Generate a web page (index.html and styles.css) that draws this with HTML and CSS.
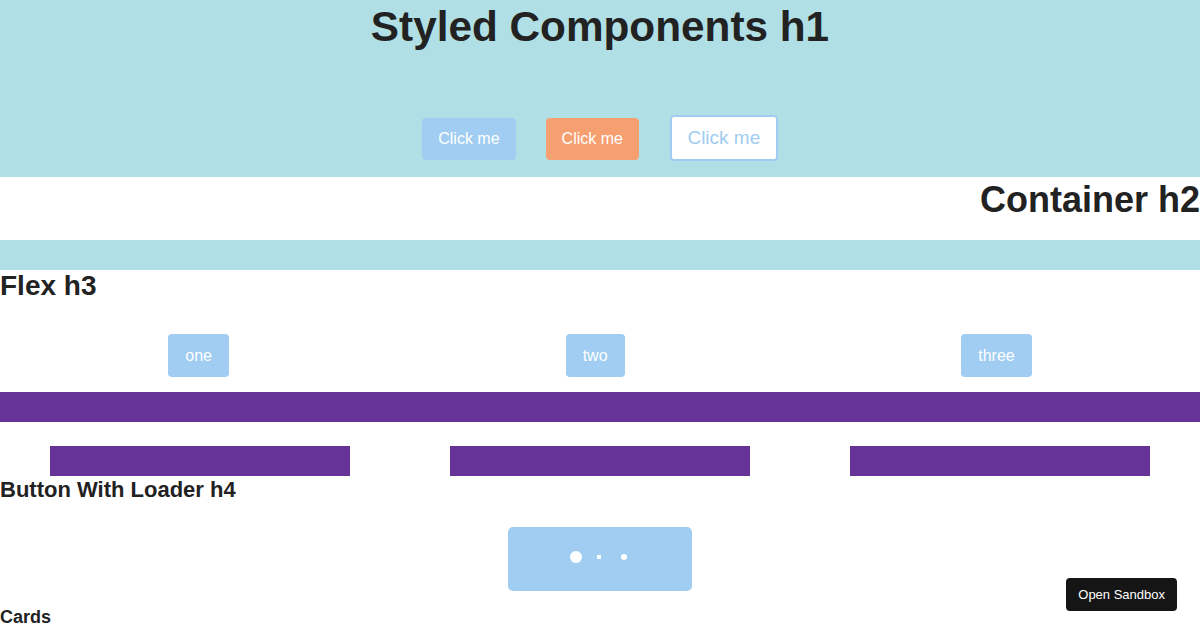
FILE: index.html
```html
<!DOCTYPE html>
<html>
<head>
<meta charset="utf-8">
<title>Styled Components</title>
<link rel="stylesheet" href="styles.css">
</head>
<body>
  <header class="hero">
    <h1 class="hero-title">Styled Components h1</h1>
    <div class="btn-row">
      <button class="btn btn-blue">Click me</button>
      <button class="btn btn-orange">Click me</button>
      <button class="btn btn-outline">Click me</button>
    </div>
  </header>
  <section class="container">
    <h2 class="container-title">Container h2</h2>
  </section>
  <div class="bar-blue"></div>
  <h3 class="flex-title">Flex h3</h3>
  <div class="flex-row">
    <span class="chip">one</span>
    <span class="chip">two</span>
    <span class="chip">three</span>
  </div>
  <div class="bar-purple"></div>
  <div class="box-row">
    <div class="box"></div>
    <div class="box"></div>
    <div class="box"></div>
  </div>
  <h4 class="loader-title">Button With Loader h4</h4>
  <div class="loader-row">
    <button class="loader-btn">
      <span class="dot dot-big"></span>
      <span class="dot dot-square"></span>
      <span class="dot dot-small"></span>
    </button>
  </div>
  <h5 class="cards-title">Cards</h5>
  <a class="sandbox-btn">Open Sandbox</a>
</body>
</html>
```
FILE: styles.css
```css
* { box-sizing: border-box; }
html, body { margin: 0; padding: 0; }
body {
  font-family: "Liberation Sans", Arial, sans-serif;
  color: #222;
  background: #fff;
  overflow: hidden;
  height: 630px;
}
.hero {
  background: #b0dfe5;
  height: 177px;
  padding-top: 0;
}
.hero-title {
  margin: 0;
  text-align: center;
  font-size: 42.3px;
  line-height: 52px;
  padding-top: 1px;
  font-weight: bold;
}
.btn-row {
  display: flex;
  justify-content: center;
  align-items: center;
  gap: 30px;
  margin-top: 62px;
  height: 46px;
}
.btn {
  font-family: "Liberation Sans", Arial, sans-serif;
  font-size: 16px;
  color: #fff;
  border: none;
  border-radius: 4px;
  height: 42px;
  padding: 0 16px;
  cursor: pointer;
  align-self: flex-end;
  margin-bottom: 1px;
}
.btn-blue { background: #a0cdf1; }
.btn-orange { background: #f6a072; }
.btn-outline {
  background: #fff;
  color: #a0cdf1;
  border: 2px solid #a0cdf1;
  font-size: 19px;
  height: 46px;
  padding: 0 15.5px;
  margin-left: 1px;
  margin-bottom: 0;
}
.container { height: 63px; padding-top: 2px; }
.container-title {
  margin: 0;
  text-align: right;
  font-size: 36px;
  line-height: 41px;
}
.bar-blue { height: 30px; background: #b0dfe5; }
.flex-title {
  margin: 0;
  font-size: 28px;
  line-height: 32px;
}
.flex-row {
  display: flex;
  justify-content: space-around;
  margin-top: 32px;
}
.chip {
  background: #a0cdf1;
  color: #fff;
  font-size: 16px;
  line-height: 43px;
  height: 43px;
  padding: 0 17px;
  border-radius: 4px;
}
.bar-purple {
  margin-top: 15px;
  height: 30px;
  background: #663399;
}
.box-row {
  display: flex;
  justify-content: space-around;
  margin-top: 24px;
}
.box { width: 300px; height: 30px; background: #663399; }
.loader-title {
  margin: 0;
  font-size: 22px;
  line-height: 27px;
}
.loader-row {
  display: flex;
  justify-content: center;
  margin-top: 24px;
}
.loader-btn {
  width: 184px;
  height: 64px;
  border: none;
  border-radius: 5px;
  background: #a0cdf1;
  display: flex;
  align-items: center;
  justify-content: center;
  padding: 0 3px 4px 0;
}
.dot { display: block; background: #fff; }
.dot-big { width: 12px; height: 12px; border-radius: 50%; margin-right: 15px; }
.dot-square { width: 4px; height: 4px; margin-right: 20px; }
.dot-small { width: 6px; height: 6px; border-radius: 50%; }
.cards-title {
  margin: 16px 0 0;
  font-size: 18px;
  line-height: 21px;
}
.sandbox-btn {
  position: fixed;
  right: 23px;
  bottom: 19px;
  height: 33px;
  padding: 0 12px;
  background: #151515;
  color: #fff;
  border-radius: 4px;
  font-size: 13px;
  line-height: 33px;
  font-family: "Liberation Sans", Arial, sans-serif;
}
```
